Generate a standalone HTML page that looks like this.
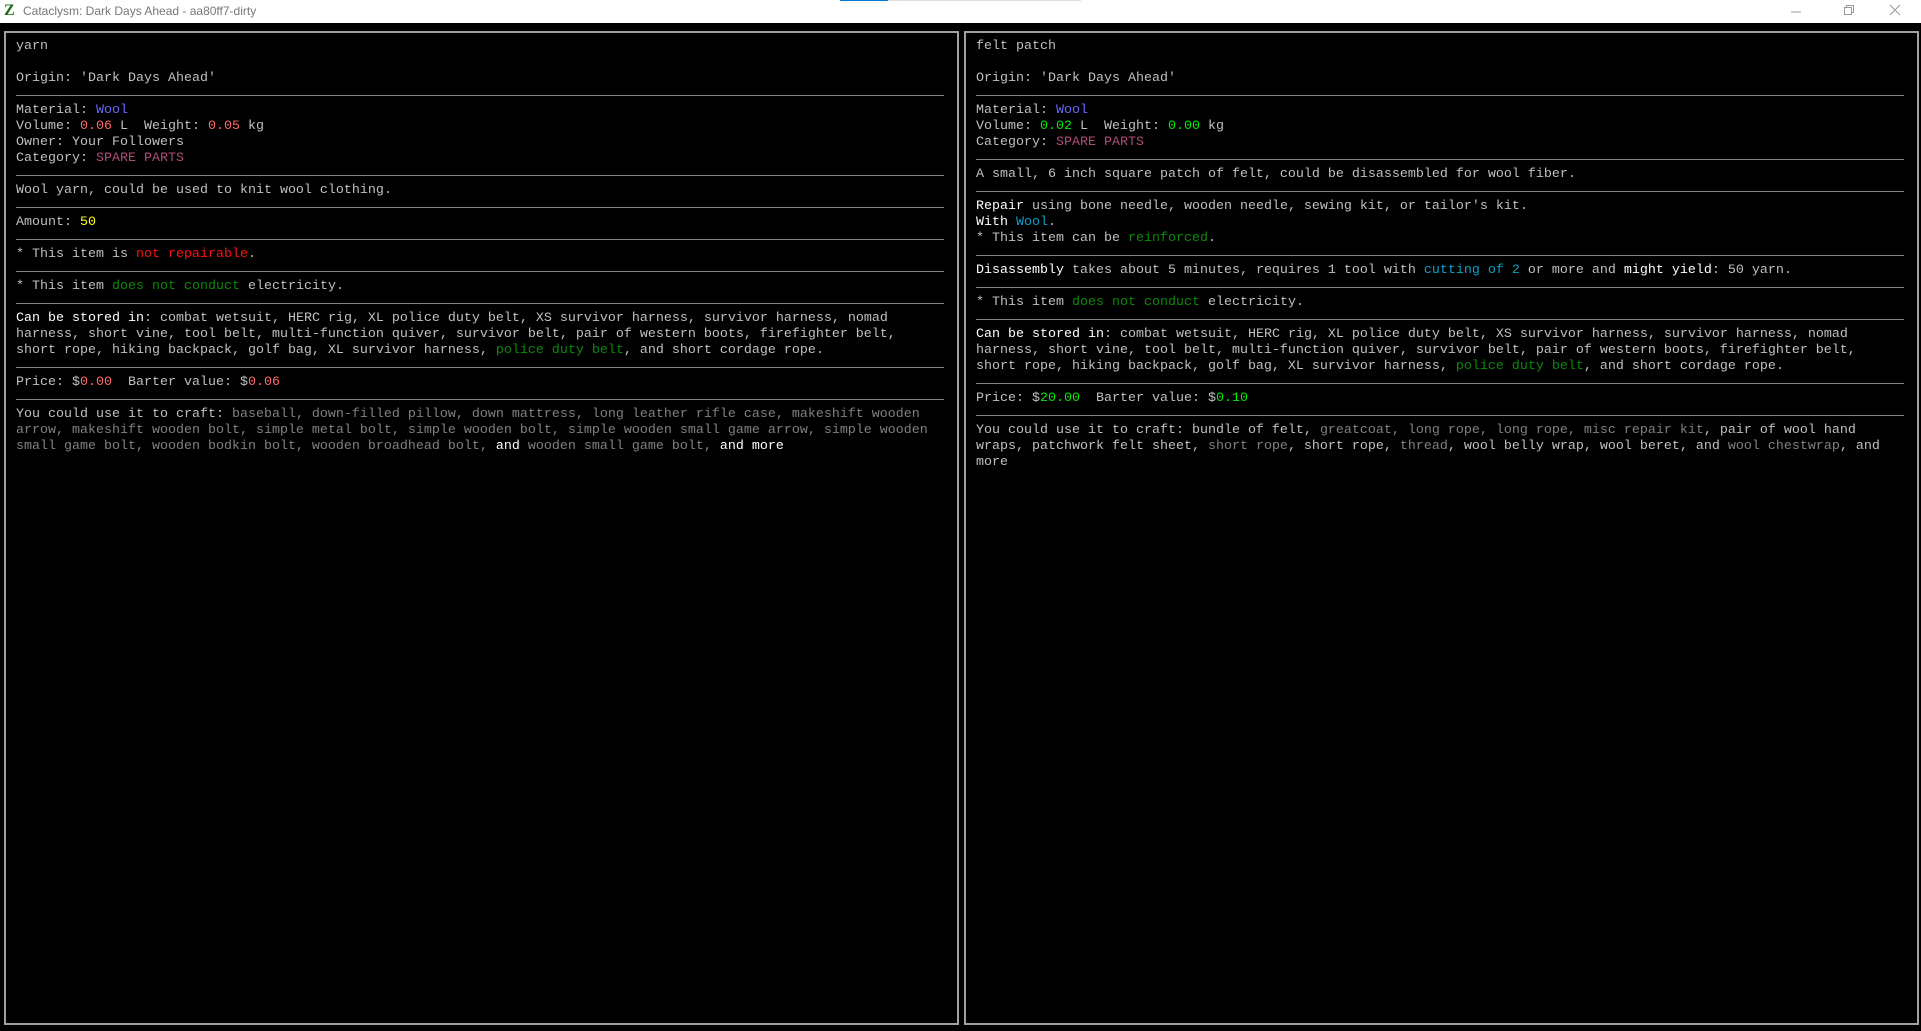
<!DOCTYPE html>
<html><head><meta charset="utf-8"><style>
html,body{margin:0;padding:0;}
body{width:1921px;height:1031px;background:#000;position:relative;overflow:hidden;font-family:"Liberation Mono",monospace;font-size:13.33px;color:#c0c0c0;}
.tb{position:absolute;left:0;top:0;width:1921px;height:23px;background:#fff;font-family:"Liberation Sans",sans-serif;font-size:12px;color:#777;}
.tb .t{position:absolute;left:23px;top:4px;}
.tb .z{position:absolute;left:4px;top:2px;font-weight:bold;font-size:16px;color:#1a6e1a;font-family:"Liberation Serif",serif;}
.pb1{position:absolute;left:840px;top:0;width:48px;height:1px;background:#0a78d7;}
.pb2{position:absolute;left:888px;top:0;width:193px;height:1px;background:#ddd;}
.panel{position:absolute;top:31px;height:990px;border:2px solid #a0a0a0;}
.r{position:absolute;height:16px;line-height:16px;white-space:pre;}
.s{position:absolute;height:1px;background:#808080;}
.w{color:#fff}.d{color:#808080}.g{color:#0a8a0a}.G{color:#00ee00}.c{color:#0aa0c8}.b{color:#6868ff}.p{color:#ff6868}.m{color:#b04a78}.R{color:#ff1010}.y{color:#ffff20}
</style></head><body>
<div class="tb"><span class="z">Z</span><span class="t">Cataclysm: Dark Days Ahead - aa80ff7-dirty</span>
<svg style="position:absolute;left:1790px;top:6px" width="12" height="12"><line x1="1" y1="6" x2="11" y2="6" stroke="#999"/></svg>
<svg style="position:absolute;left:1843px;top:4px" width="12" height="12"><rect x="1.5" y="3.5" width="7" height="7" fill="none" stroke="#999"/><path d="M3.5 3.5V1.5H10.5V8.5H8.5" fill="none" stroke="#999"/></svg>
<svg style="position:absolute;left:1889px;top:4px" width="12" height="12"><path d="M1 1L11 11M11 1L1 11" stroke="#999"/></svg>
</div>
<div class="pb1"></div><div class="pb2"></div>
<div class="panel" style="left:4px;width:951px"></div>
<div class="panel" style="left:964px;width:951px"></div>

<!-- LEFT -->
<div class="r" style="left:16px;top:39px">yarn</div>
<div class="r" style="left:16px;top:71px">Origin: 'Dark Days Ahead'</div>
<div class="s" style="left:16px;top:95px;width:928px"></div>
<div class="r" style="left:16px;top:103px">Material: <span class="b">Wool</span></div>
<div class="r" style="left:16px;top:119px">Volume: <span class="p">0.06</span> L  Weight: <span class="p">0.05</span> kg</div>
<div class="r" style="left:16px;top:135px">Owner: Your Followers</div>
<div class="r" style="left:16px;top:151px">Category: <span class="m">SPARE PARTS</span></div>
<div class="s" style="left:16px;top:175px;width:928px"></div>
<div class="r" style="left:16px;top:183px">Wool yarn, could be used to knit wool clothing.</div>
<div class="s" style="left:16px;top:207px;width:928px"></div>
<div class="r" style="left:16px;top:215px">Amount: <span class="y">50</span></div>
<div class="s" style="left:16px;top:239px;width:928px"></div>
<div class="r" style="left:16px;top:247px">* This item is <span class="R">not repairable</span>.</div>
<div class="s" style="left:16px;top:271px;width:928px"></div>
<div class="r" style="left:16px;top:279px">* This item <span class="g">does not conduct</span> electricity.</div>
<div class="s" style="left:16px;top:303px;width:928px"></div>
<div class="r" style="left:16px;top:311px"><span class="w">Can be stored in</span>: combat wetsuit, HERC rig, XL police duty belt, XS survivor harness, survivor harness, nomad</div>
<div class="r" style="left:16px;top:327px">harness, short vine, tool belt, multi-function quiver, survivor belt, pair of western boots, firefighter belt,</div>
<div class="r" style="left:16px;top:343px">short rope, hiking backpack, golf bag, XL survivor harness, <span class="g">police duty belt</span>, and short cordage rope.</div>
<div class="s" style="left:16px;top:367px;width:928px"></div>
<div class="r" style="left:16px;top:375px">Price: $<span class="p">0.00</span>  Barter value: $<span class="p">0.06</span></div>
<div class="s" style="left:16px;top:399px;width:928px"></div>
<div class="r" style="left:16px;top:407px">You could use it to craft: <span class="d">baseball, down-filled pillow, down mattress, long leather rifle case, makeshift wooden</span></div>
<div class="r d" style="left:16px;top:423px">arrow, makeshift wooden bolt, simple metal bolt, simple wooden bolt, simple wooden small game arrow, simple wooden</div>
<div class="r d" style="left:16px;top:439px">small game bolt, wooden bodkin bolt, wooden broadhead bolt, <span class="w">and</span> wooden small game bolt, <span class="w">and more</span></div>

<!-- RIGHT -->
<div class="r" style="left:976px;top:39px">felt patch</div>
<div class="r" style="left:976px;top:71px">Origin: 'Dark Days Ahead'</div>
<div class="s" style="left:976px;top:95px;width:928px"></div>
<div class="r" style="left:976px;top:103px">Material: <span class="b">Wool</span></div>
<div class="r" style="left:976px;top:119px">Volume: <span class="G">0.02</span> L  Weight: <span class="G">0.00</span> kg</div>
<div class="r" style="left:976px;top:135px">Category: <span class="m">SPARE PARTS</span></div>
<div class="s" style="left:976px;top:159px;width:928px"></div>
<div class="r" style="left:976px;top:167px">A small, 6 inch square patch of felt, could be disassembled for wool fiber.</div>
<div class="s" style="left:976px;top:191px;width:928px"></div>
<div class="r" style="left:976px;top:199px"><span class="w">Repair</span> using bone needle, wooden needle, sewing kit, or tailor's kit.</div>
<div class="r" style="left:976px;top:215px"><span class="w">With</span> <span class="c">Wool</span>.</div>
<div class="r" style="left:976px;top:231px">* This item can be <span class="g">reinforced</span>.</div>
<div class="s" style="left:976px;top:255px;width:928px"></div>
<div class="r" style="left:976px;top:263px"><span class="w">Disassembly</span> takes about 5 minutes, requires 1 tool with <span class="c">cutting of 2</span> or more and <span class="w">might yield</span>: 50 yarn.</div>
<div class="s" style="left:976px;top:287px;width:928px"></div>
<div class="r" style="left:976px;top:295px">* This item <span class="g">does not conduct</span> electricity.</div>
<div class="s" style="left:976px;top:319px;width:928px"></div>
<div class="r" style="left:976px;top:327px"><span class="w">Can be stored in</span>: combat wetsuit, HERC rig, XL police duty belt, XS survivor harness, survivor harness, nomad</div>
<div class="r" style="left:976px;top:343px">harness, short vine, tool belt, multi-function quiver, survivor belt, pair of western boots, firefighter belt,</div>
<div class="r" style="left:976px;top:359px">short rope, hiking backpack, golf bag, XL survivor harness, <span class="g">police duty belt</span>, and short cordage rope.</div>
<div class="s" style="left:976px;top:383px;width:928px"></div>
<div class="r" style="left:976px;top:391px">Price: $<span class="G">20.00</span>  Barter value: $<span class="G">0.10</span></div>
<div class="s" style="left:976px;top:415px;width:928px"></div>
<div class="r" style="left:976px;top:423px">You could use it to craft: bundle of felt, <span class="d">greatcoat, long rope, long rope, misc repair kit</span>, pair of wool hand</div>
<div class="r" style="left:976px;top:439px">wraps, patchwork felt sheet, <span class="d">short rope</span>, short rope, <span class="d">thread</span>, wool belly wrap, wool beret, and <span class="d">wool chestwrap</span>, and</div>
<div class="r" style="left:976px;top:455px">more</div>
</body></html>
